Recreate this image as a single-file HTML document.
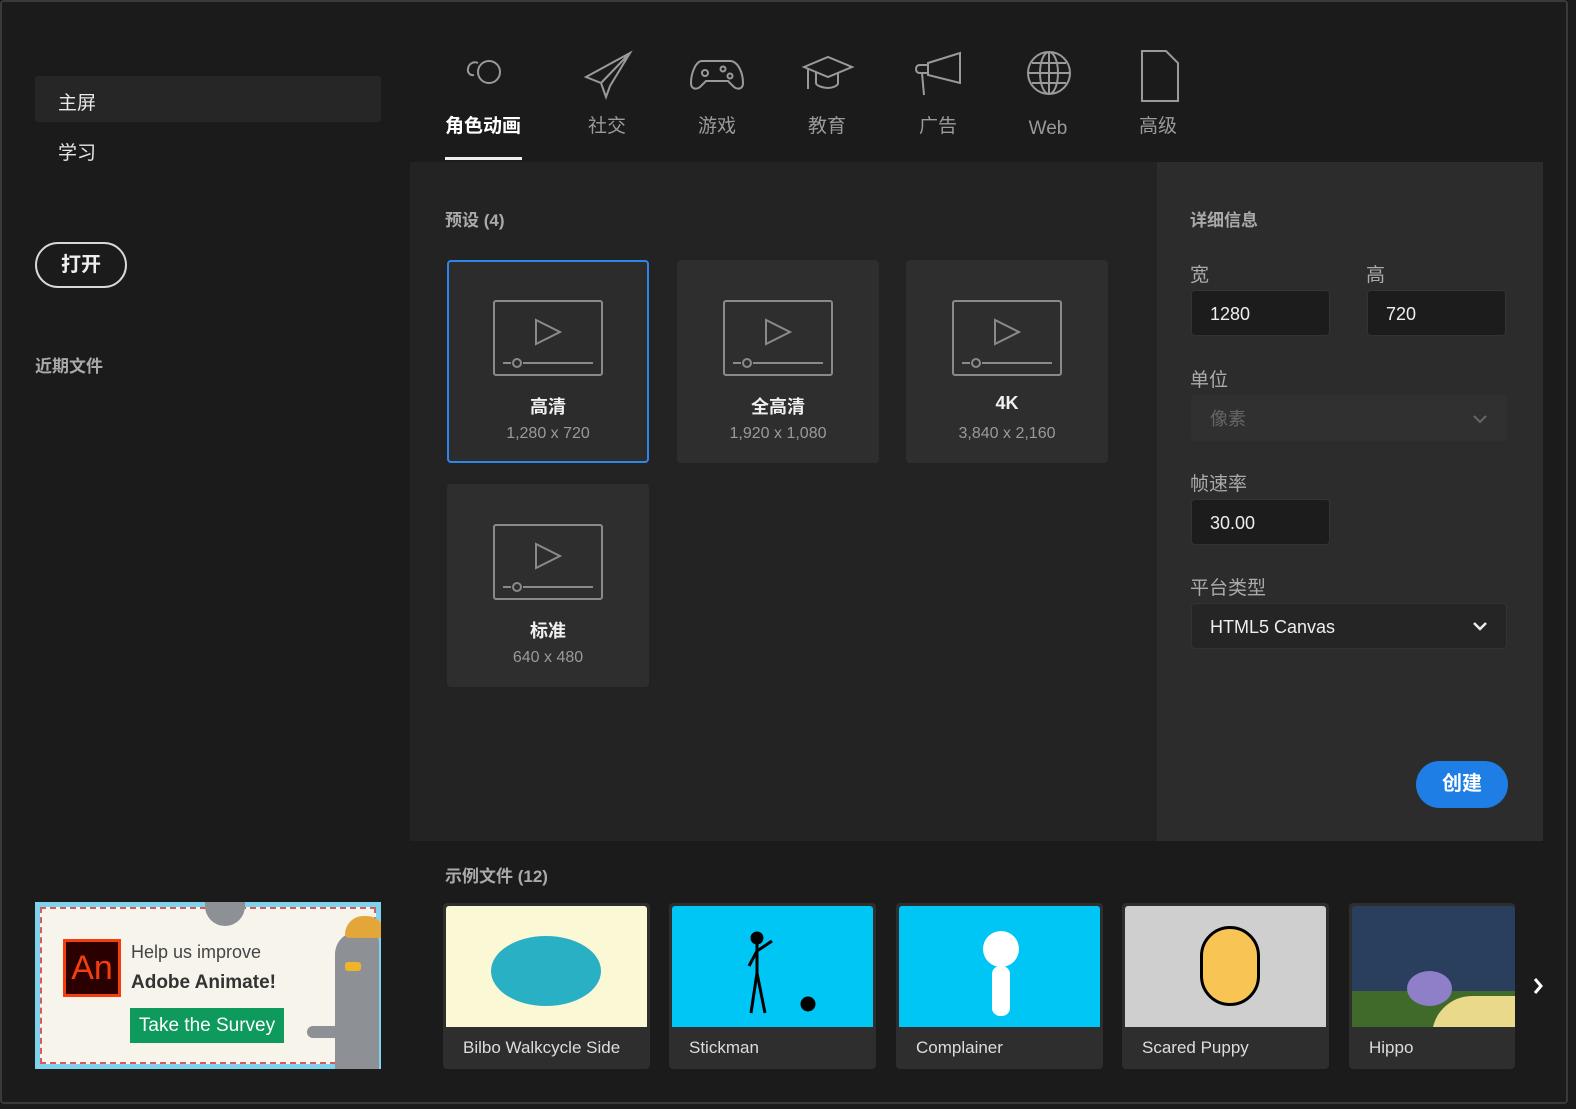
<!DOCTYPE html>
<html><head><meta charset="utf-8"><style>
*{margin:0;padding:0;box-sizing:border-box}
body{width:1576px;height:1109px;background:#1b1b1b;font-family:"Liberation Sans","Noto Sans CJK SC",sans-serif;color:#ddd;position:relative;overflow:hidden}
.a{position:absolute}
.frame{left:0;top:0;width:1568px;height:1104px;border:2px solid #3a3a3a;border-radius:4px}
.nav{left:35px;top:76px;width:346px;height:46px;background:#262626;border-radius:3px}
.t{font-size:19px;color:#e8e8e8}
.open{left:35px;top:242px;width:92px;height:46px;border:2px solid #d8d8d8;border-radius:23px;font-size:20px;font-weight:bold;color:#eee;text-align:center;line-height:42px}
.tab{top:114px;font-size:19px;color:#9a9a9a;text-align:center;width:90px;line-height:26px}
.panel{left:410px;top:162px;width:747px;height:679px;background:#232323}
.rp{left:1157px;top:162px;width:386px;height:679px;background:#2c2c2c}
.card{width:202px;height:203px;background:#2e2e2e;border-radius:4px}
.card svg{position:absolute;left:46px;top:40px}
.card .n{position:absolute;top:133px;width:100%;text-align:center;font-size:18px;font-weight:bold;color:#f0f0f0}
.card .s{position:absolute;top:165px;width:100%;text-align:center;font-size:16px;color:#9a9a9a}
.lab{font-size:19px;color:#aaa}
.inp{height:46px;background:#1c1c1c;border-radius:4px;font-size:18px;color:#eee;padding-left:18px;line-height:46px;border:1px solid #333}
.ex{top:903px;width:207px;height:166px;background:#2e2e2e;border-radius:4px;overflow:hidden}
.ex .img{position:absolute;left:3px;top:3px;right:3px;height:121px;border-radius:3px 3px 0 0;overflow:hidden}
.ex .l{position:absolute;left:20px;top:135px;font-size:17px;color:#ddd}
</style></head><body>
<div class="a frame"></div>
<div class="a nav"></div>
<div class="a t" style="left:58px;top:88px">主屏</div>
<div class="a t" style="left:58px;top:138px">学习</div>
<div class="a open">打开</div>
<div class="a" style="left:35px;top:352px;font-size:17px;color:#aaa;font-weight:bold">近期文件</div>

<svg class="a" style="left:440px;top:45px" width="760" height="60" fill="none" stroke="#9a9a9a" stroke-width="2">
<circle cx="49" cy="27" r="11"/><path d="M38 18a7 7 0 0 0-10 6a5 5 0 0 0 6 6"/>
<path d="M190 8L146 32L161 38L166 52L170 41Z M161 38L190 8"/>
<path d="M262 16h28c8 0 13 12 13 22c0 6-5 7-9 4l-6-6h-22l-6 6c-4 3-9 2-9-4c0-10 5-22 11-22z"/><circle cx="265" cy="28" r="3"/><circle cx="283" cy="24" r="2.5"/><circle cx="290" cy="31" r="2.5"/>
<path d="M364 22l24-10l24 10l-24 10z M376 27v11c0 3 8 5 12 5s10-2 10-5v-11 M368 24v20"/>
<path d="M480 20h8v8h-8c-3 0-4-2-4-4s1-4 4-4z M488 18l32-10v30l-32-8z M482 28l2 22"/>
<circle cx="609" cy="28" r="21"/><ellipse cx="609" cy="28" rx="9" ry="21"/><path d="M588 28h42 M592 18h34 M592 38h34 M609 7v42"/>
<path d="M702 6h24l12 12v38h-36z"/>
</svg>
<div class="a tab" style="left:438px;color:#fff;font-weight:bold">角色动画</div>
<div class="a" style="left:445px;top:157px;width:77px;height:3px;background:#eee"></div>
<div class="a tab" style="left:562px">社交</div>
<div class="a tab" style="left:672px">游戏</div>
<div class="a tab" style="left:782px">教育</div>
<div class="a tab" style="left:893px">广告</div>
<div class="a tab" style="left:1003px;top:116px">Web</div>
<div class="a tab" style="left:1113px">高级</div>

<div class="a panel"></div>
<div class="a rp"></div>
<div class="a" style="left:445px;top:206px;font-size:17px;color:#aaa;font-weight:bold">预设 (4)</div>

<div class="a card" style="left:447px;top:260px;border:2px solid #2f86ea;background:#2c2c2c">
<svg width="112" height="78" style="left:44px;top:38px" fill="none" stroke="#8a8a8a" stroke-width="2"><rect x="1" y="1" width="108" height="74" rx="2"/><path d="M43 20v24l24-12z"/><path d="M10 63h8 M30 63h70"/><circle cx="24" cy="63" r="4"/></svg>
<div class="n" style="top:131px">高清</div><div class="s" style="top:163px">1,280 x 720</div></div>
<div class="a card" style="left:677px;top:260px">
<svg width="112" height="78" fill="none" stroke="#8a8a8a" stroke-width="2"><rect x="1" y="1" width="108" height="74" rx="2"/><path d="M43 20v24l24-12z"/><path d="M10 63h8 M30 63h70"/><circle cx="24" cy="63" r="4"/></svg>
<div class="n">全高清</div><div class="s">1,920 x 1,080</div></div>
<div class="a card" style="left:906px;top:260px">
<svg width="112" height="78" fill="none" stroke="#8a8a8a" stroke-width="2"><rect x="1" y="1" width="108" height="74" rx="2"/><path d="M43 20v24l24-12z"/><path d="M10 63h8 M30 63h70"/><circle cx="24" cy="63" r="4"/></svg>
<div class="n">4K</div><div class="s">3,840 x 2,160</div></div>
<div class="a card" style="left:447px;top:484px">
<svg width="112" height="78" fill="none" stroke="#8a8a8a" stroke-width="2"><rect x="1" y="1" width="108" height="74" rx="2"/><path d="M43 20v24l24-12z"/><path d="M10 63h8 M30 63h70"/><circle cx="24" cy="63" r="4"/></svg>
<div class="n">标准</div><div class="s">640 x 480</div></div>

<div class="a" style="left:1190px;top:206px;font-size:17px;color:#aaa;font-weight:bold">详细信息</div>
<div class="a lab" style="left:1190px;top:260px">宽</div>
<div class="a lab" style="left:1366px;top:260px">高</div>
<div class="a inp" style="left:1191px;top:290px;width:139px">1280</div>
<div class="a inp" style="left:1367px;top:290px;width:139px">720</div>
<div class="a lab" style="left:1190px;top:365px">单位</div>
<div class="a inp" style="left:1191px;top:395px;width:316px;background:#303030;border-color:#303030;color:#666">像素<svg style="position:absolute;right:18px;top:18px" width="16" height="10" fill="none" stroke="#666" stroke-width="2"><path d="M2 2l6 6l6-6"/></svg></div>
<div class="a lab" style="left:1190px;top:469px">帧速率</div>
<div class="a inp" style="left:1191px;top:499px;width:139px">30.00</div>
<div class="a lab" style="left:1190px;top:573px">平台类型</div>
<div class="a inp" style="left:1191px;top:603px;width:316px;background:#252525">HTML5 Canvas
<svg style="position:absolute;right:18px;top:17px" width="16" height="10" fill="none" stroke="#eee" stroke-width="2.5"><path d="M2 2l6 6l6-6"/></svg></div>
<div class="a" style="left:1416px;top:761px;width:92px;height:47px;background:#1f7ee6;border-radius:24px;color:#fff;font-size:20px;font-weight:bold;text-align:center;line-height:47px">创建</div>

<div class="a" style="left:445px;top:862px;font-size:17px;color:#aaa;font-weight:bold">示例文件 (12)</div>

<div class="a" style="left:35px;top:902px;width:346px;height:167px;background:#7fd3ef;overflow:hidden">
<div class="a" style="left:5px;top:5px;width:336px;height:157px;background:#f7f4ec;border:2px dashed #d95a5a"></div>
<div class="a" style="left:28px;top:37px;width:58px;height:58px;background:#f53d0f;padding:3px"><div style="width:100%;height:100%;background:#2b0000;color:#f53d0f;font-size:34px;text-align:center;line-height:52px">An</div></div>
<div class="a" style="left:96px;top:40px;font-size:18px;color:#444">Help us improve</div>
<div class="a" style="left:96px;top:70px;font-size:19px;color:#333;font-weight:bold">Adobe Animate!</div>
<div class="a" style="left:95px;top:106px;width:154px;height:35px;background:#0d9a5c;color:#fff;font-size:19px;text-align:center;line-height:35px">Take the Survey</div>
<div class="a" style="left:300px;top:30px;width:44px;height:140px;background:#8d9094;border-radius:22px 10px 0 0"></div>
<div class="a" style="left:310px;top:14px;width:40px;height:22px;background:#e3a63a;border-radius:20px 20px 4px 4px"></div>
<div class="a" style="left:310px;top:60px;width:16px;height:9px;background:#f0b429;border-radius:3px"></div>
<div class="a" style="left:272px;top:124px;width:40px;height:12px;background:#8d9094;border-radius:6px"></div>
<div class="a" style="left:170px;top:0;width:40px;height:24px;background:#8d9094;border-radius:0 0 20px 20px"></div>
</div>

<div class="a ex" style="left:443px"><div class="img" style="background:#fbf8d6"><div class="a" style="left:45px;top:30px;width:110px;height:70px;background:#2ab0c5;border-radius:50%"></div></div><div class="l">Bilbo Walkcycle Side</div></div>
<div class="a ex" style="left:669px"><div class="img" style="background:#00c6f6"><svg class="a" style="left:70px;top:10px" width="80" height="100" stroke="#000" stroke-width="3" fill="none"><circle cx="15" cy="22" r="5" fill="#000"/><path d="M15 27v30l-6 40 M15 57l8 40 M15 35l-8 15 M15 35l15-10"/><circle cx="66" cy="88" r="6" fill="#000"/></svg></div><div class="l">Stickman</div></div>
<div class="a ex" style="left:896px"><div class="img" style="background:#00c6f6"><div class="a" style="left:84px;top:25px;width:36px;height:36px;background:#fff;border-radius:50%"></div><div class="a" style="left:93px;top:60px;width:18px;height:50px;background:#fff;border-radius:8px"></div></div><div class="l">Complainer</div></div>
<div class="a ex" style="left:1122px"><div class="img" style="background:#cfcfcf"><div class="a" style="left:75px;top:20px;width:60px;height:80px;background:#f8c555;border:3px solid #000;border-radius:30px"></div></div><div class="l">Scared Puppy</div></div>
<div class="a ex" style="left:1349px;width:166px"><div class="img" style="background:#2a3f5e;right:0"><div class="a" style="left:0;top:85px;width:170px;height:40px;background:#3f6a2a"></div><div class="a" style="left:80px;top:90px;width:90px;height:40px;background:#e8da8a;border-radius:40px 0 0 0"></div><div class="a" style="left:55px;top:65px;width:45px;height:35px;background:#8f7fc9;border-radius:50%"></div></div><div class="l">Hippo</div></div>
<svg class="a" style="left:1532px;top:977px" width="12" height="18" fill="none" stroke="#fff" stroke-width="3"><path d="M3 2l6 7l-6 7"/></svg>
</body></html>
